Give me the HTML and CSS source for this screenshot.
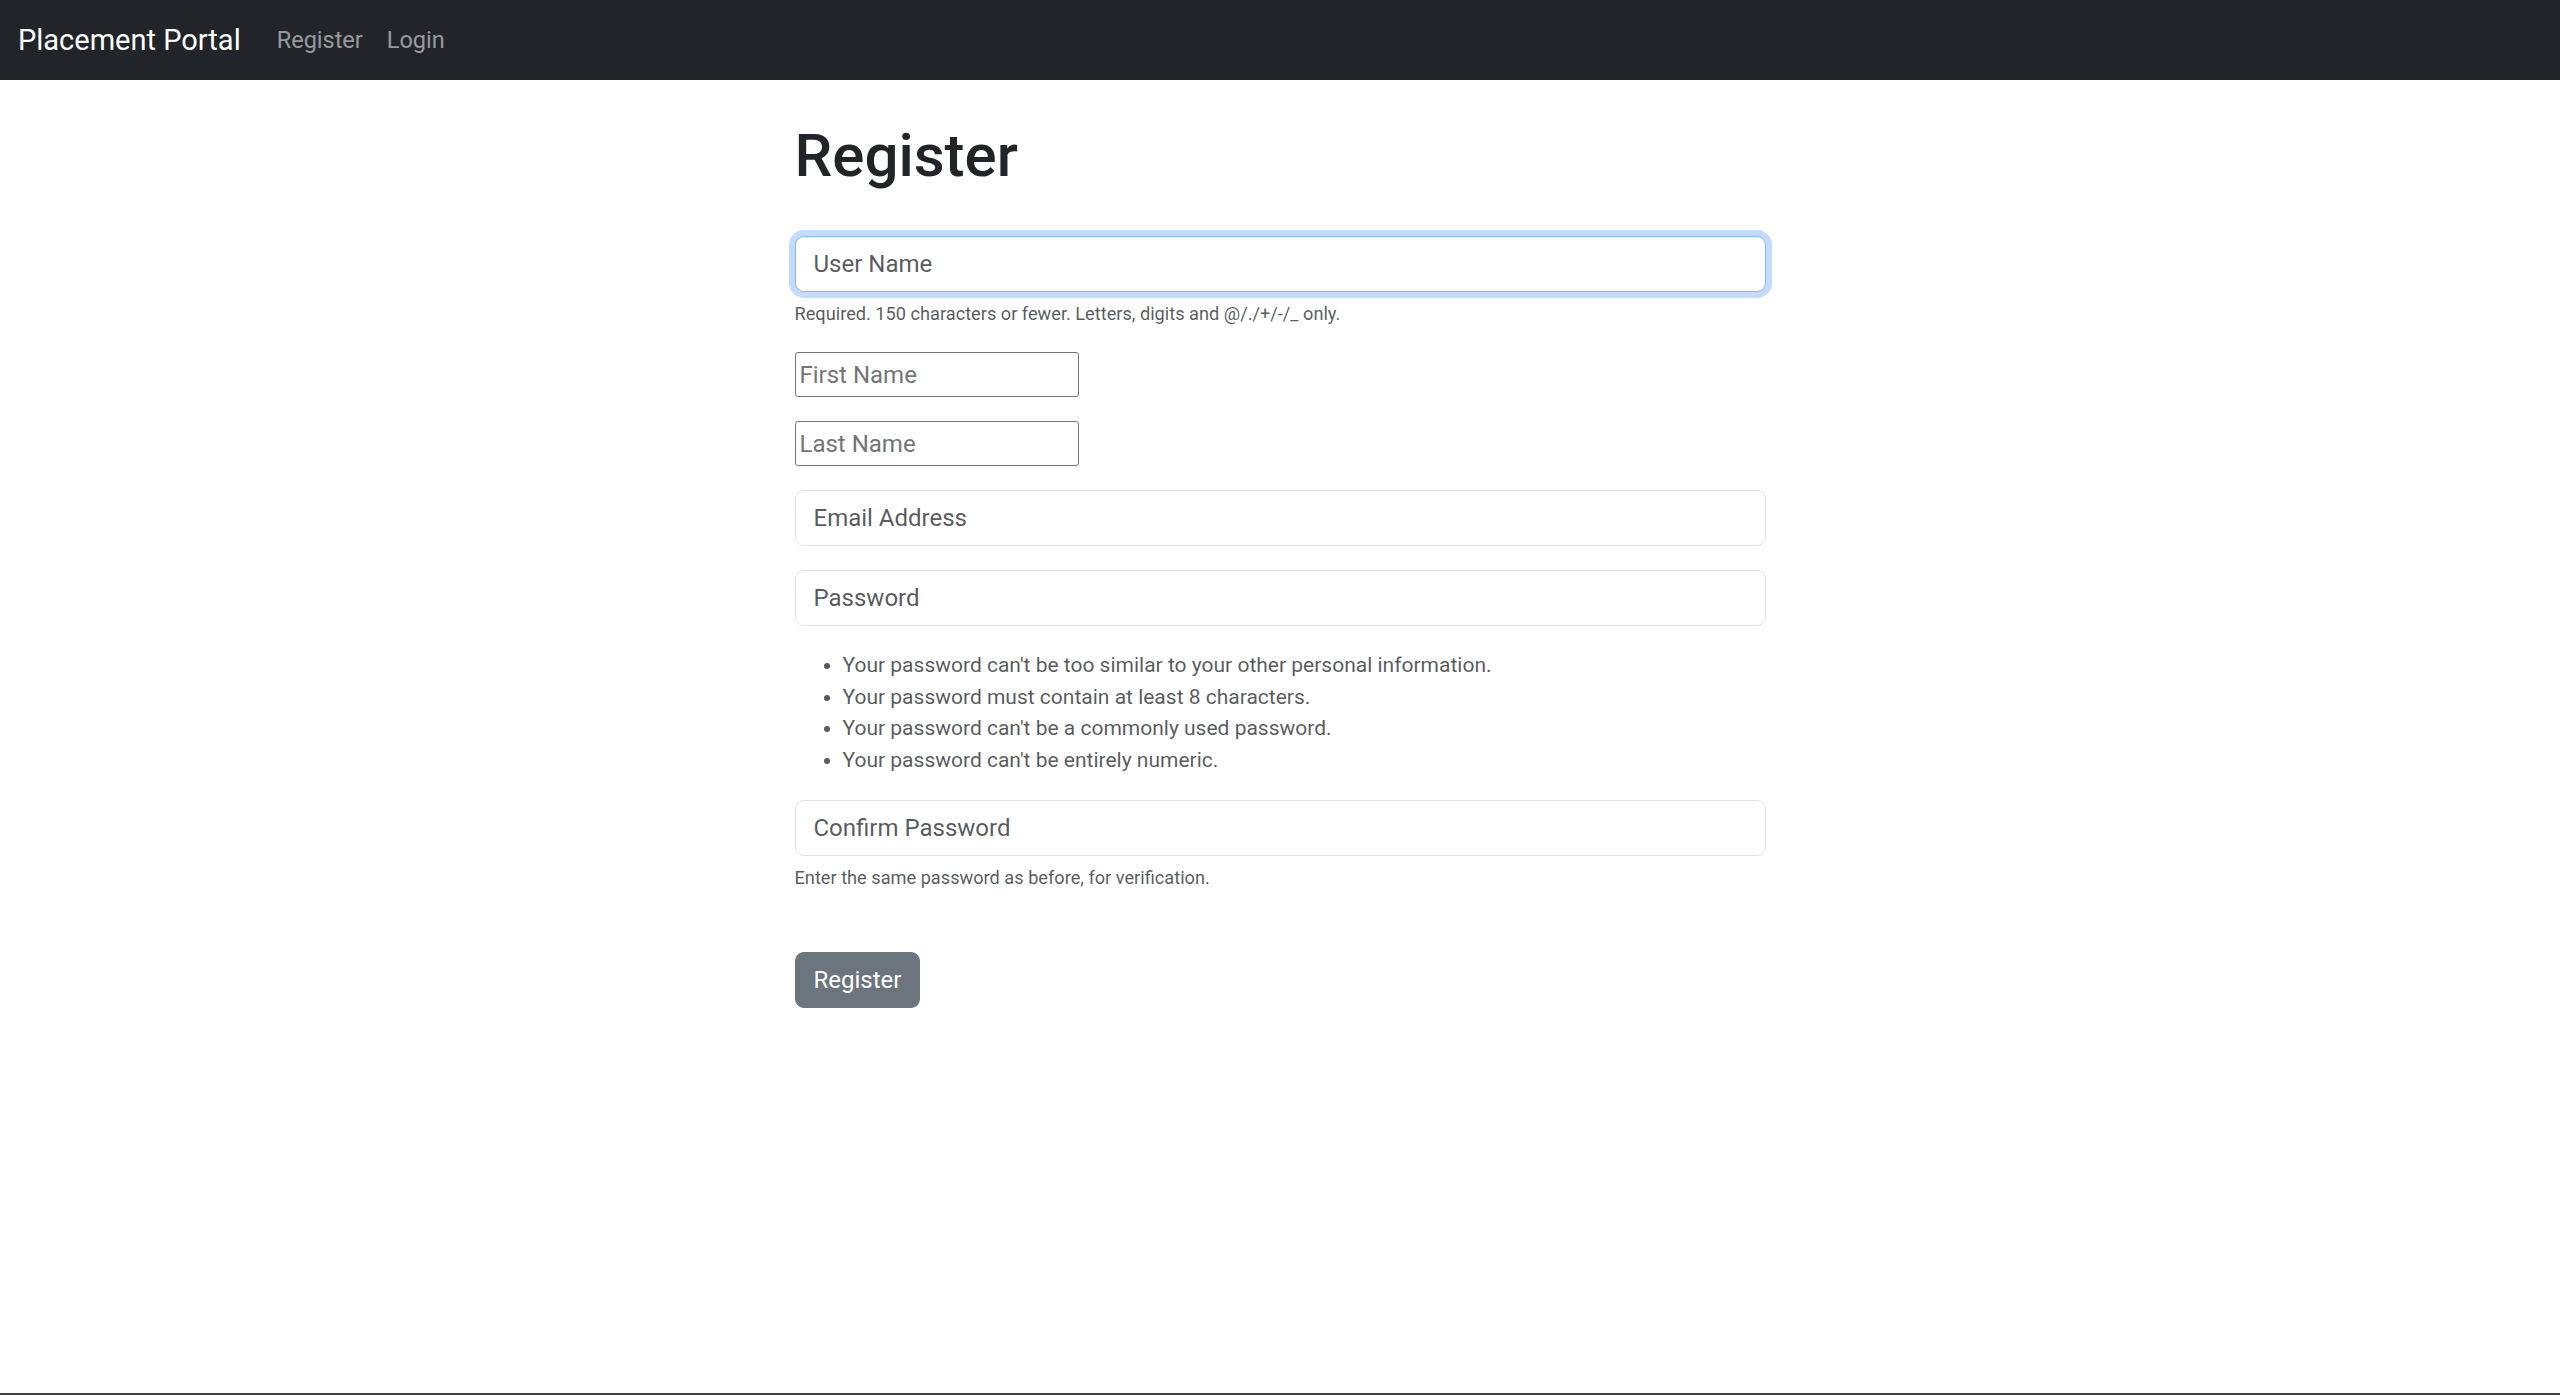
FILE: index.html
```html
<!DOCTYPE html>
<html lang="en">
<head>
<meta charset="utf-8">
<title>Register | Placement Portal</title>
<link rel="stylesheet" href="styles.css">
</head>
<body>
<div class="page">
  <nav class="navbar">
    <a class="brand" href="#">Placement Portal</a>
    <ul class="nav-links">
      <li><a class="nav-link" href="#">Register</a></li>
      <li><a class="nav-link" href="#">Login</a></li>
    </ul>
  </nav>

  <main class="main">
    <h1 class="title">Register</h1>
    <form class="register-form" action="#" method="post">
      <div class="field">
        <input class="form-control is-focused" type="text" name="username" placeholder="User Name">
        <small class="help">Required. 150 characters or fewer. Letters, digits and @/./+/-/_ only.</small>
      </div>
      <div class="field">
        <input class="plain-input" type="text" name="first_name" placeholder="First Name">
      </div>
      <div class="field">
        <input class="plain-input" type="text" name="last_name" placeholder="Last Name">
      </div>
      <div class="field">
        <input class="form-control" type="email" name="email" placeholder="Email Address">
      </div>
      <div class="field">
        <input class="form-control" type="password" name="password1" placeholder="Password">
        <ul class="rules">
          <li>Your password can't be too similar to your other personal information.</li>
          <li>Your password must contain at least 8 characters.</li>
          <li>Your password can't be a commonly used password.</li>
          <li>Your password can't be entirely numeric.</li>
        </ul>
      </div>
      <div class="field">
        <input class="form-control" type="password" name="password2" placeholder="Confirm Password">
        <small class="help">Enter the same password as before, for verification.</small>
      </div>
      <button class="btn-secondary" type="submit">Register</button>
    </form>
  </main>

  <div class="screen-edge"></div>
</div>
</body>
</html>
```

FILE: styles.css
```css
* {
  box-sizing: border-box;
}

html,
body {
  margin: 0;
  height: 100%;
}

body {
  font-family: Roboto, "Liberation Sans", sans-serif;
  font-size: 24px;
  line-height: 1.5;
  color: #212529;
  background: #fff;
}

.page {
  display: flex;
  flex-direction: column;
  min-height: 100vh;
}

/* top navigation */
.navbar {
  height: 80px;
  flex: none;
  display: flex;
  align-items: center;
  padding: 0 18px;
  background: #212529;
}

.brand {
  margin-right: 24px;
  font-size: 29px;
  line-height: 45px;
  color: #fff;
  text-decoration: none;
}

.nav-links {
  display: flex;
  margin: 0;
  padding: 0;
  list-style: none;
}

.nav-link {
  display: block;
  padding: 0 12px;
  font-size: 23.5px;
  line-height: 36px;
  color: rgba(255, 255, 255, 0.55);
  text-decoration: none;
}

/* page body */
.main {
  flex: 1;
  width: 971px;
  margin: 0 auto;
}

.title {
  margin: 40px 0 0;
  font-size: 60px;
  font-weight: 500;
  line-height: 72px;
}

.register-form {
  display: flex;
  flex-direction: column;
  align-items: flex-start;
  margin-top: 44px;
}

.field {
  display: flex;
  flex-direction: column;
  align-self: stretch;
  align-items: flex-start;
}

.field + .field {
  margin-top: 24px;
}

.form-control {
  display: block;
  width: 100%;
  height: 56px;
  padding: 9px 18px;
  font: inherit;
  font-size: 24px;
  line-height: 36px;
  color: #212529;
  background: #fff;
  border: 1px solid #dee2e6;
  border-radius: 9px;
  outline: none;
}

.form-control::placeholder {
  color: rgba(33, 37, 41, 0.75);
  opacity: 1;
}

.form-control.is-focused {
  border-color: #86b7fe;
  box-shadow: 0 0 0 6px rgba(13, 110, 253, 0.25);
}

/* unstyled name inputs */
.plain-input {
  display: block;
  width: 284px;
  height: 45px;
  padding: 3px 4px;
  font: inherit;
  font-size: 24px;
  line-height: 36px;
  color: #000;
  background: #fff;
  border: 1px solid #767676;
  border-radius: 3px;
  outline: none;
}

.plain-input::placeholder {
  color: #757575;
  opacity: 1;
}

.help {
  display: block;
  margin-top: 7px;
  font-size: 18.2px;
  line-height: 29px;
  color: rgba(33, 37, 41, 0.75);
}

.rules {
  margin: 24px 0 0;
  padding-left: 48px;
  font-size: 21px;
  line-height: 31.5px;
  color: rgba(33, 37, 41, 0.75);
}

.btn-secondary {
  margin-top: 60px;
  height: 56px;
  padding: 9px 18px;
  font: inherit;
  font-size: 24px;
  line-height: 36px;
  color: #fff;
  background: #6c757d;
  border: 1px solid #6c757d;
  border-radius: 9px;
  cursor: pointer;
}

/* dark strip along the bottom edge */
.screen-edge {
  flex: none;
  height: 2px;
  background: #3f3f3f;
}
```
